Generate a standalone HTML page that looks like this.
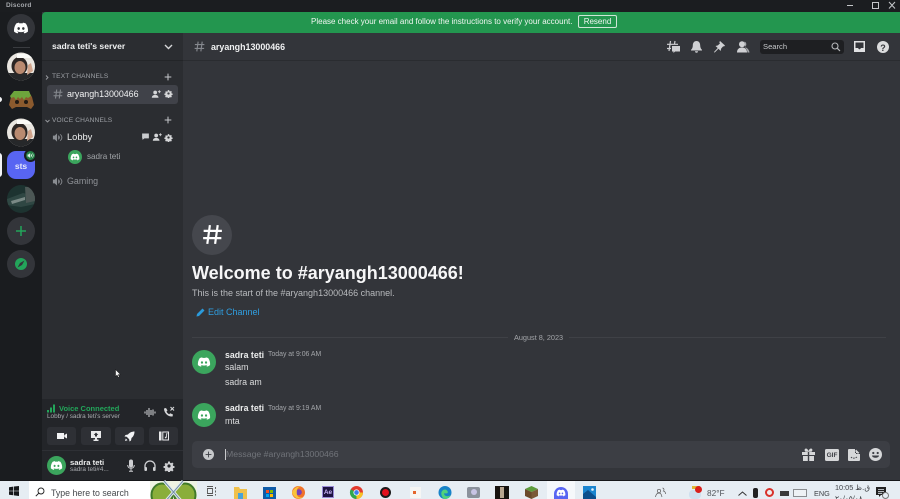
<!DOCTYPE html>
<html><head><meta charset="utf-8"><style>
html,body{margin:0;padding:0;background:#1a1c1f}
#r{position:relative;width:900px;height:499px;overflow:hidden;font-family:"Liberation Sans",sans-serif;background:#33353a;color:#dcddde;filter:blur(.3px)}
#r>*{position:absolute}
.t{white-space:nowrap;line-height:1}
svg{display:block;overflow:visible}
</style></head><body><div id="r">
<svg width="0" height="0" style="position:absolute"><defs>
<symbol id="cl" viewBox="0 0 24 24"><path fill="#fff" d="M19.27 5.33C17.94 4.71 16.5 4.26 15 4a.09.09 0 0 0-.07.03c-.18.33-.39.76-.53 1.09a16.09 16.09 0 0 0-4.8 0c-.14-.34-.35-.76-.54-1.09-.01-.02-.04-.03-.07-.03-1.5.26-2.93.71-4.27 1.33-.01 0-.02.01-.03.02-2.72 4.07-3.47 8.03-3.1 11.95 0 .02.01.04.03.05 1.8 1.32 3.53 2.12 5.24 2.65.03.01.06 0 .07-.02.4-.55.76-1.13 1.07-1.74.02-.04 0-.08-.04-.09-.57-.22-1.11-.48-1.64-.78-.04-.02-.04-.08-.01-.11.11-.08.22-.17.33-.25.02-.02.05-.02.07-.01 3.44 1.57 7.15 1.57 10.55 0 .02-.01.05-.01.07.01.11.09.22.17.33.26.04.03.04.09-.01.11-.52.31-1.07.56-1.64.78-.04.01-.05.06-.04.09.32.61.68 1.19 1.07 1.74.03.01.06.02.09.01 1.72-.53 3.45-1.33 5.25-2.65.02-.01.03-.03.03-.05.44-4.53-.73-8.46-3.1-11.95-.01-.01-.02-.02-.04-.02zM8.52 14.91c-1.03 0-1.89-.95-1.89-2.12s.84-2.12 1.89-2.12c1.06 0 1.9.96 1.89 2.12 0 1.17-.84 2.12-1.89 2.12zm6.97 0c-1.03 0-1.89-.95-1.89-2.12s.84-2.12 1.89-2.12c1.06 0 1.9.96 1.89 2.12 0 1.17-.83 2.12-1.89 2.12z"/></symbol>
<symbol id="gear" viewBox="0 0 24 24"><path fill="currentColor" fill-rule="evenodd" d="M10 2h4l.6 3 2 .9 2.600-1.700 2.800 2.800-1.700 2.600.9 2 3 .6v4l-3 .6-.9 2 1.700 2.600-2.800 2.800-2.600-1.700-2 .9-.6 3h-4l-.6-3-2-.9-2.600 1.700-2.800-2.800 1.700-2.600-.9-2-3-.6v-4l3-.6.9-2L2 7.800 4.800 5l2.600 1.700 2-.9zM12 8.500a3.500 3.500 0 1 0 0 7 3.500 3.500 0 0 0 0-7z" transform="translate(1.200 1.200) scale(.9)"/></symbol>
<symbol id="inv" viewBox="0 0 24 24"><path fill="currentColor" d="M10 4a4.500 4.500 0 1 1 0 9 4.500 4.500 0 0 1 0-9zM2 21c0-4.500 3.500-7 8-7s8 2.500 8 7zM19 3h2v2.500h2.500v2H21V10h-2V7.500h-2.500v-2H19z"/></symbol>
<symbol id="spk" viewBox="0 0 24 24"><path fill="currentColor" d="M11 3v18l-5-5H2V8h4zM13.500 7c2.500 1 3.500 3 3.500 5s-1 4-3.500 5zM18 4.500c3 1.500 4.500 4.500 4.500 7.500s-1.500 6-4.500 7.500l-1-1.500c2.500-1.500 3.500-3.500 3.500-6s-1-4.500-3.500-6z"/></symbol>
<symbol id="hash" viewBox="0 0 24 24"><path fill="none" stroke="currentColor" stroke-width="2.100" d="M9.500 3 7 21M17 3l-2.500 18M3.500 8.500H21M3 15.500h17.500"/></symbol>
<symbol id="plus" viewBox="0 0 12 12"><path fill="none" stroke="currentColor" stroke-width="1.500" d="M6 1v10M1 6h10"/></symbol>
<symbol id="chat" viewBox="0 0 24 24"><path fill="currentColor" d="M3 4h18v13H9l-5 4v-4H3z"/></symbol>
</defs></svg>

<!-- chrome -->
<div style="left:0;top:0;width:900px;height:12px;background:#1b1d20"></div>
<div class="t" style="left:6px;top:2px;font:bold 6.500px 'Liberation Sans',sans-serif;color:#a6a9ad;letter-spacing:.2px">Discord</div>
<svg style="left:850px;top:0" width="50" height="12"><path fill="none" stroke="#c4c6c9" stroke-width="1" d="M-3 5.500h6M22.500 2.500h6v6h-6zM39 2l6 6.500M45 2l-6 6.500"/></svg>
<div style="left:0;top:12px;width:42px;height:469px;background:#1a1c1f"></div>

<!-- banner -->
<div style="left:42px;top:12px;width:858px;height:21px;background:#23964f;border-radius:4px 0 0 0"></div>
<div class="t" style="left:311px;top:18px;font-size:8px;color:#f1f6f2">Please check your email and follow the instructions to verify your account.</div>
<div class="t" style="left:578px;top:15px;width:39px;height:13px;box-sizing:border-box;border:1px solid #cfe6d7;border-radius:2px;font-size:8px;line-height:11px;text-align:center;color:#f1f6f2">Resend</div>

<!-- server rail -->
<div style="left:7px;top:14px;width:28px;height:28px;border-radius:50%;background:#33353a"></div>
<svg style="left:13px;top:20px" width="16" height="16"><use href="#cl" width="16" height="16"/></svg>
<div style="left:13px;top:47px;width:17px;height:1px;background:#3a3c40"></div>

<svg style="left:7px;top:52px" width="28" height="29" viewBox="0 0 28 29"><defs><clipPath id="c1"><circle cx="14" cy="14.500" r="14"/></clipPath></defs><g clip-path="url(#c1)"><rect width="28" height="29" fill="#e9e6e0"/><rect x="0" y="21" width="28" height="8" fill="#26282a"/><ellipse cx="12.500" cy="14" rx="8" ry="9" fill="#2c2624"/><ellipse cx="13" cy="15.500" rx="5.500" ry="6.500" fill="#b98a70"/><path d="M21 13l3-2 2 8-6 4z" fill="#d0a48c"/><rect x="10" y="2" width="15" height="4" fill="#fbfbf8"/></g></svg>
<svg style="left:7px;top:118px" width="28" height="29" viewBox="0 0 28 29"><defs><clipPath id="c2"><circle cx="14" cy="14.500" r="14"/></clipPath></defs><g clip-path="url(#c2)"><rect width="28" height="29" fill="#e9e6e0"/><rect x="0" y="21" width="28" height="8" fill="#26282a"/><ellipse cx="12.500" cy="14" rx="8" ry="9" fill="#2c2624"/><ellipse cx="13" cy="15.500" rx="5.500" ry="6.500" fill="#b98a70"/><path d="M21 13l3-2 2 8-6 4z" fill="#d0a48c"/><rect x="10" y="2" width="15" height="4" fill="#fbfbf8"/></g></svg>

<svg style="left:8px;top:90px" width="27" height="20" viewBox="0 0 27 20"><path fill="#8b5a2e" d="M6 2h15l3 5 2 8-3 4-4-2H8l-4 2-3-4 2-8z"/><path fill="#6da53c" d="M6 1h15l2 5-3 2-2-1-2 3-2-3-2 2-2-2-2 3-2-3-3 1-1-2z"/><circle cx="9" cy="12" r="2" fill="#211a14"/><circle cx="18" cy="12" r="2" fill="#211a14"/></svg>
<div style="left:-1px;top:97px;width:3px;height:5px;border-radius:0 3px 3px 0;background:#f2f3f5"></div>

<div style="left:-1px;top:153px;width:3px;height:24px;border-radius:0 3px 3px 0;background:#f2f3f5"></div>
<div style="left:7px;top:151px;width:28px;height:28px;border-radius:9px;background:#5865f2"></div>
<div class="t" style="left:7px;top:161px;width:28px;text-align:center;font:bold 8.500px 'Liberation Sans',sans-serif;color:#e8eafc">sts</div>
<div style="left:24px;top:149px;width:13px;height:13px;border-radius:50%;background:#248046;border:2px solid #1a1c1f;box-sizing:border-box"></div>
<svg style="left:27px;top:152px;color:#dff3e6" width="7" height="7"><use href="#spk" width="7" height="7"/></svg>

<svg style="left:7px;top:185px" width="28" height="28" viewBox="0 0 28 28"><defs><clipPath id="c3"><circle cx="14" cy="14" r="14"/></clipPath></defs><g clip-path="url(#c3)"><rect width="28" height="28" fill="#1d3330"/><path d="M0 14 16 8l12 3v8l-14 3-14-2z" fill="#2f4743"/><path d="M18 2h10v14l-9 2z" fill="#4c5755"/><path d="M4 16l14-4v3L5 19z" fill="#7a8a86"/></g></svg>

<div style="left:7px;top:217px;width:28px;height:28px;border-radius:50%;background:#33353a"></div>
<svg style="left:15px;top:225px;color:#23a55a" width="12" height="12"><use href="#plus" width="12" height="12"/></svg>
<div style="left:7px;top:250px;width:28px;height:28px;border-radius:50%;background:#33353a"></div>
<div style="left:15px;top:258px;width:12px;height:12px;border-radius:50%;background:#23a55a"></div>
<svg style="left:17px;top:260px" width="8" height="8" viewBox="0 0 8 8"><path fill="#33353a" d="M7.500.5 5 5 3 3zM.5 7.500 3 3l2 2z"/></svg>

<!-- channel sidebar -->
<div style="left:42px;top:33px;width:141px;height:448px;background:#2b2d31"></div>
<div style="left:42px;top:60px;width:141px;height:1px;background:#232528"></div>
<div class="t" style="left:52px;top:41px;font:bold 8.600px 'Liberation Sans',sans-serif;color:#f0f1f2">sadra teti's server</div>
<svg style="left:164px;top:44px" width="9" height="6"><path fill="none" stroke="#d5d6d8" stroke-width="1.400" d="M1 1l3.500 3.500L8 1"/></svg>

<svg style="left:45px;top:75px" width="4" height="5"><path fill="none" stroke="#9a9ca1" stroke-width=".9" d="M1 .5 3 2.500 1 4.500"/></svg>
<div class="t" style="left:52px;top:74px;font-size:6.600px;color:#9da0a5;letter-spacing:.15px">TEXT CHANNELS</div>
<svg style="left:164px;top:73px;color:#c5c7ca" width="8" height="8"><use href="#plus" width="8" height="8"/></svg>

<div style="left:47px;top:85px;width:131px;height:19px;border-radius:3px;background:#404249"></div>
<svg style="left:52px;top:88px;color:#86898f" width="12" height="12"><use href="#hash" width="12" height="12"/></svg>
<div class="t" style="left:67px;top:89.500px;font-size:8.900px;color:#f0f1f2">aryangh13000466</div>
<svg style="left:151px;top:89px;color:#d5d6d8" width="10" height="10"><use href="#inv" width="10" height="10"/></svg>
<svg style="left:164px;top:89px;color:#d5d6d8" width="9" height="9"><use href="#gear" width="9" height="9"/></svg>

<svg style="left:45px;top:119px" width="5" height="4"><path fill="none" stroke="#9a9ca1" stroke-width=".9" d="M.5 1 2.500 3 4.500 1"/></svg>
<div class="t" style="left:52px;top:117.500px;font-size:6.600px;color:#9da0a5;letter-spacing:.15px">VOICE CHANNELS</div>
<svg style="left:164px;top:116px;color:#c5c7ca" width="8" height="8"><use href="#plus" width="8" height="8"/></svg>

<svg style="left:52px;top:132px;color:#8a8d92" width="11" height="11"><use href="#spk" width="11" height="11"/></svg>
<div class="t" style="left:67px;top:133px;font-size:9.300px;color:#eceded">Lobby</div>
<svg style="left:141px;top:132px;color:#c9cbce" width="9" height="9"><use href="#chat" width="9" height="9"/></svg>
<svg style="left:152px;top:132px;color:#d5d6d8" width="10" height="10"><use href="#inv" width="10" height="10"/></svg>
<svg style="left:164px;top:133px;color:#d5d6d8" width="9" height="9"><use href="#gear" width="9" height="9"/></svg>

<div style="left:68px;top:150px;width:14px;height:14px;border-radius:50%;background:#3ba55d"></div>
<svg style="left:70px;top:152px" width="10" height="10"><use href="#cl" width="10" height="10"/></svg>
<div class="t" style="left:87px;top:153px;font-size:8.100px;color:#a2a5a9">sadra teti</div>

<svg style="left:52px;top:175.500px;color:#8a8d92" width="11" height="11"><use href="#spk" width="11" height="11"/></svg>
<div class="t" style="left:67px;top:177px;font-size:8.900px;color:#8f9297">Gaming</div>

<svg style="left:115px;top:369px" width="6" height="9" viewBox="0 0 6 9"><path fill="#f4f4f4" stroke="#111" stroke-width=".5" d="M.5.500v7l1.600-1.500 1 2.500 1.200-.5-1-2.400h2.200z"/></svg>

<!-- voice panel -->
<div style="left:42px;top:399px;width:141px;height:82px;background:#232529"></div>
<svg style="left:47px;top:404px" width="9" height="9"><path fill="#23a55a" d="M0 6h2v2.500H0zM3 3.500h2v5H3zM6 .5h2v8H6z"/></svg>
<div class="t" style="left:59px;top:404px;font:bold 7.500px 'Liberation Sans',sans-serif;color:#23a55a">Voice Connected</div>
<div class="t" style="left:47px;top:414px;font-size:6.400px;color:#a9abaf">Lobby / sadra teti's server</div>
<svg style="left:144px;top:407px" width="12" height="11"><path fill="none" stroke="#c9cbce" stroke-width="1.100" d="M1 4.500v2M3 3v5M5 1v9M7 3v5M9 2.500v6M11 4.500v2"/></svg>
<svg style="left:163px;top:406px" width="12" height="12" viewBox="0 0 12 12"><path fill="#d5d6d8" d="M1 2.500 3 2l1.500 2.500-1 1c.5 1.200 1.500 2.200 2.700 2.700l1-1L10 8.500l-.5 2C5 11 1 7 1 2.500z"/><path fill="none" stroke="#d5d6d8" stroke-width="1.100" d="M7.500 1l3.500 3.500M11 1 7.500 4.500"/></svg>

<div style="left:47px;top:427px;width:29px;height:18px;border-radius:3px;background:#2e3035"></div>
<div style="left:81px;top:427px;width:30px;height:18px;border-radius:3px;background:#2e3035"></div>
<div style="left:115px;top:427px;width:29px;height:18px;border-radius:3px;background:#2e3035"></div>
<div style="left:149px;top:427px;width:29px;height:18px;border-radius:3px;background:#2e3035"></div>
<svg style="left:57px;top:432px" width="10" height="8"><path fill="#f2f3f5" d="M0 1h7v6H0zM7.300 3 10 1.500v5L7.300 5z"/></svg>
<svg style="left:91px;top:431px" width="10" height="10"><path fill="#e8e9ea" d="M0 0h10v7H6v1.500h1.500V10h-5V8.500H4V7H0z"/><path fill="#2e3035" d="M5 1.500 7.300 4H6v1.500H4V4H2.700z"/></svg>
<svg style="left:124px;top:431px" width="11" height="11" viewBox="0 0 11 11"><path fill="#f2f3f5" d="M10.500.5C8 .5 5.500 1.500 4 3.500L1.500 4l-1 1.500 2.200.3 2.500 2.500.3 2.200L7 9.500l.5-2.500C9.500 5.500 10.500 3 10.500.5zM1.800 7.500l1.700 1.700L1 10z"/></svg>
<svg style="left:159px;top:431px" width="10" height="10" viewBox="0 0 10 10"><path fill="#e8e9ea" fill-rule="evenodd" d="M0 .5h2.500v9H0zM3.300.5H10v9H3.300zM4.300 1.500v7H9v-7z"/><path fill="none" stroke="#e8e9ea" stroke-width=".8" d="M7.500 2.500v3.800M7.500 2.500l1 .4"/><circle cx="6.700" cy="6.500" r=".9" fill="#e8e9ea"/></svg>

<div style="left:42px;top:450px;width:141px;height:1px;background:#2e3035"></div>
<div style="left:47px;top:456px;width:19px;height:19px;border-radius:50%;background:#3ba55d"></div>
<svg style="left:50px;top:459px" width="13" height="13"><use href="#cl" width="13" height="13"/></svg>
<div class="t" style="left:70px;top:458px;font:bold 7.700px 'Liberation Sans',sans-serif;color:#eceded">sadra teti</div>
<div class="t" style="left:70px;top:467px;font-size:6.400px;color:#a9abaf">sadra teti#4...</div>
<svg style="left:127px;top:460px" width="8" height="12" viewBox="0 0 8 12"><path fill="#cfd0d3" d="M2 1.500a2 2 0 0 1 4 0v4a2 2 0 0 1-4 0z"/><path fill="none" stroke="#cfd0d3" d="M.7 5c0 2 1.300 3.300 3.300 3.300S7.300 7 7.300 5M4 8.300V11M2 11.300h4"/></svg>
<svg style="left:144px;top:460px" width="12" height="12" viewBox="0 0 12 12"><path fill="none" stroke="#cfd0d3" stroke-width="1.300" d="M1 8V6a5 5 0 0 1 10 0v2"/><rect x=".4" y="7" width="2.600" height="4" rx="1" fill="#cfd0d3"/><rect x="9" y="7" width="2.600" height="4" rx="1" fill="#cfd0d3"/></svg>
<svg style="left:163px;top:460px;color:#cfd0d3" width="12" height="12"><use href="#gear" width="12" height="12"/></svg>

<!-- main header -->
<div style="left:183px;top:60px;width:717px;height:1px;background:#2a2c30"></div>
<svg style="left:193px;top:40px;color:#85888e" width="13" height="13"><use href="#hash" width="13" height="13"/></svg>
<div class="t" style="left:211px;top:41.500px;font:bold 8.900px 'Liberation Sans',sans-serif;color:#f0f1f2">aryangh13000466</div>

<svg style="left:667px;top:41px" width="13" height="12" viewBox="0 0 13 12"><path fill="none" stroke="#cfd0d3" stroke-width="1.200" d="M3.500 0 2 10M8 0 7.500 3M0 3.300h11M0 7.500h4"/><path fill="#cfd0d3" d="M5 5h8v5.500H8L6.500 12v-1.500H5z"/></svg>
<svg style="left:691px;top:41px" width="11" height="12" viewBox="0 0 11 12"><path fill="#cfd0d3" d="M5.500 0C3 0 1.800 2 1.800 4.500c0 2-.8 3.500-1.800 4.300v.7h11v-.7C10 8 9.200 6.500 9.200 4.500 9.200 2 8 0 5.500 0zM4 10.200h3a1.500 1.500 0 0 1-3 0z"/></svg>
<svg style="left:714px;top:41px" width="11" height="12" viewBox="0 0 11 12"><path fill="#cfd0d3" d="M6 0l5 4.500-1 1-.8-.3-2 2.300L6.600 10 4.500 7.800.6 11.600 0 11l3.700-4L1.500 5l2.400-.6L6 2.400 5.300 1.300z"/></svg>
<svg style="left:737px;top:41px" width="13" height="12" viewBox="0 0 13 12"><circle cx="5" cy="3.200" r="3" fill="#cfd0d3"/><path fill="#cfd0d3" d="M0 11.500c0-3.500 2.200-5 5-5s5 1.500 5 5z"/><path fill="#a5a7ab" d="M7.500.5a3 3 0 0 1 0 5.500c2 .5 4.500 2 5 5.500h-2c0-2-1-3.500-2-4.500z"/></svg>
<div style="left:760px;top:40px;width:84px;height:14px;border-radius:3px;background:#1e1f22"></div>
<div class="t" style="left:763px;top:43px;font-size:7.600px;color:#c4c6c9">Search</div>
<svg style="left:831px;top:42px" width="10" height="10"><circle cx="4" cy="4" r="3" fill="none" stroke="#b5b7ba" stroke-width="1.100"/><path stroke="#b5b7ba" stroke-width="1.200" d="M6.300 6.300 9 9"/></svg>
<svg style="left:854px;top:41px" width="11" height="11" viewBox="0 0 11 11"><path fill="#e0e1e3" fill-rule="evenodd" d="M0 0h11v11H0zM1.500 1.500v5.500h2.500l1 1.300h1L7 7h2.500V1.500z"/></svg>
<div style="left:877px;top:41px;width:12px;height:12px;border-radius:50%;background:#dcddde"></div>
<div class="t" style="left:877px;top:43px;width:12px;text-align:center;font:bold 9px 'Liberation Sans',sans-serif;color:#33353a">?</div>

<!-- welcome -->
<div style="left:192px;top:215px;width:40px;height:40px;border-radius:50%;background:#45474d"></div>
<svg style="left:200px;top:222px;color:#fff" width="25" height="25"><use href="#hash" width="25" height="25"/></svg>
<div class="t" style="left:192px;top:262.500px;font:bold 18px 'Liberation Sans',sans-serif;color:#f6f6f7">Welcome to #aryangh13000466!</div>
<div class="t" style="left:192px;top:288.500px;font-size:9px;color:#b8babd">This is the start of the #aryangh13000466 channel.</div>
<svg style="left:196px;top:308px" width="9" height="9" viewBox="0 0 9 9"><path fill="#2b9bdc" d="M6.500.5 8.500 2.500 3 8 .5 8.500 1 6z"/></svg>
<div class="t" style="left:208px;top:308px;font-size:9px;color:#2f9ee0">Edit Channel</div>

<!-- divider -->
<div style="left:192px;top:337px;width:316px;height:1px;background:#3f4146"></div>
<div style="left:569px;top:337px;width:317px;height:1px;background:#3f4146"></div>
<div class="t" style="left:514px;top:334px;font-size:7.300px;color:#a3a5a9">August 8, 2023</div>

<!-- messages -->
<div style="left:192px;top:350px;width:24px;height:24px;border-radius:50%;background:#3ba55d"></div>
<svg style="left:197px;top:355px" width="14" height="14"><use href="#cl" width="14" height="14"/></svg>
<div class="t" style="left:225px;top:350px;font:bold 8.800px 'Liberation Sans',sans-serif;color:#eceded">sadra teti</div>
<div class="t" style="left:268px;top:352px;font-size:6.900px;color:#a3a5a9">Today at 9:06 AM</div>
<div class="t" style="left:225px;top:363px;font-size:8.800px;color:#dcddde">salam</div>
<div class="t" style="left:225px;top:378px;font-size:8.800px;color:#dcddde">sadra am</div>

<div style="left:192px;top:403px;width:24px;height:24px;border-radius:50%;background:#3ba55d"></div>
<svg style="left:197px;top:408px" width="14" height="14"><use href="#cl" width="14" height="14"/></svg>
<div class="t" style="left:225px;top:403px;font:bold 8.800px 'Liberation Sans',sans-serif;color:#eceded">sadra teti</div>
<div class="t" style="left:268px;top:405.500px;font-size:6.900px;color:#a3a5a9">Today at 9:19 AM</div>
<div class="t" style="left:225px;top:417px;font-size:8.800px;color:#dcddde">mta</div>

<!-- input -->
<div style="left:192px;top:441px;width:698px;height:27px;border-radius:5px;background:#3c3e44"></div>
<div style="left:203px;top:449px;width:11px;height:11px;border-radius:50%;background:#c6c8cb"></div>
<svg style="left:205px;top:451px;color:#3c3e44" width="7" height="7"><use href="#plus" width="7" height="7"/></svg>
<div style="left:225px;top:449px;width:1px;height:11px;background:#c8c9cb"></div>
<div class="t" style="left:226px;top:450px;font-size:8.700px;color:#71747a">Message #aryangh13000466</div>
<svg style="left:802px;top:448px" width="13" height="13" viewBox="0 0 13 13"><path fill="#d6d7d9" d="M0 4h5.800v3H0zM7.200 4H13v3H7.200zM1 8h4.800v5H1zM7.200 8H12v5H7.200zM4 .5C5.300.5 6 2 6.500 3 7 2 7.700.5 9 .5c1.500 0 2 2 .5 3.200H3.500C2 2.500 2.500.5 4 .5z"/></svg>
<div style="left:825px;top:449px;width:14px;height:12px;border-radius:1.500px;background:#d6d7d9"></div>
<div class="t" style="left:825px;top:451.500px;width:14px;text-align:center;font:bold 6.500px 'Liberation Sans',sans-serif;color:#3c3e44">GIF</div>
<svg style="left:848px;top:449px" width="12" height="12" viewBox="0 0 12 12"><path fill="#d6d7d9" d="M1 0h6.500L12 4.500V11a1 1 0 0 1-1 1H1a1 1 0 0 1-1-1V1a1 1 0 0 1 1-1z"/><path fill="none" stroke="#3c3e44" d="M7.500 0v4.500H12M3 8c1 1.500 4 1.500 6 0" stroke-dasharray="1.500 1"/></svg>
<div style="left:869px;top:448px;width:13px;height:13px;border-radius:50%;background:#d6d7d9"></div>
<svg style="left:869px;top:448px" width="13" height="13"><circle cx="4.300" cy="5" r="1.100" fill="#3c3e44"/><circle cx="8.700" cy="5" r="1.100" fill="#3c3e44"/><path fill="#3c3e44" d="M3 7.500h7c0 3-7 3-7 0z"/></svg>

<!-- taskbar -->
<div style="left:0;top:480px;width:900px;height:1px;background:#16171a"></div>
<div style="left:0;top:481px;width:900px;height:18px;background:#e6edf3"></div>
<div style="left:29px;top:481px;width:121px;height:18px;background:#fff"></div>
<svg style="left:9px;top:486px" width="10" height="10"><path fill="#16181b" d="M0 1.200 4.300.6V4.700H0zM5 .5 10 0V4.700H5zM0 5.300h4.300v4L0 8.800zM5 5.300h5V10L5 9.400z"/></svg>
<svg style="left:35px;top:487px" width="10" height="10"><circle cx="6" cy="4" r="3" fill="none" stroke="#222" stroke-width=".9"/><path stroke="#222" d="M3.800 6.200.8 9.200"/></svg>
<div class="t" style="left:51px;top:489px;font-size:8.800px;color:#45484c">Type here to search</div>
<svg style="left:150px;top:481px" width="47" height="18" viewBox="0 0 47 18"><rect width="47" height="18" fill="#eef3e2"/><ellipse cx="12" cy="14" rx="10.500" ry="11.500" fill="#8aae3a" stroke="#3f7a2a" stroke-width="2"/><ellipse cx="35" cy="14" rx="10.500" ry="11.500" fill="#8aae3a" stroke="#3f7a2a" stroke-width="2"/><path fill="none" stroke="#e5ecee" stroke-width="3" d="M14 22 33 0M33 22 14 0"/><path fill="none" stroke="#6f8fa6" stroke-width="1" d="M14 22 33 0M33 22 14 0"/></svg>
<svg style="left:206px;top:486px" width="11" height="10"><path fill="none" stroke="#555" stroke-width=".9" d="M1 .5h6M1 9.500h6M1.500 2.500h5v5h-5zM9.500 1v2M9.500 4.500v2M9.500 8v1.500"/></svg>
<svg style="left:234px;top:487px" width="13" height="12"><path fill="#f0c14b" d="M0 0h5l1 2h7v10H0z"/><path fill="#4aa3d8" d="M4 6h5v6H4z"/></svg>
<div style="left:263px;top:487px;width:13px;height:12px;background:#0f5ca8"></div>
<svg style="left:266px;top:490px" width="7" height="7"><path fill="#f25022" d="M0 0h3v3H0z"/><path fill="#7fba00" d="M4 0h3v3H4z"/><path fill="#00a4ef" d="M0 4h3v3H0z"/><path fill="#ffb900" d="M4 4h3v3H4z"/></svg>
<svg style="left:292px;top:486px" width="13" height="13"><circle cx="6.500" cy="6.500" r="6.500" fill="#f0722a"/><circle cx="6.800" cy="6.300" r="3" fill="#7542b8"/><path fill="#f9c33a" d="M0 6.500C2 1 7 0 9 .5 6 1 4 3 5 9c1 2.500 4 3 6 2C8 14 2 13 0 6.500z"/></svg>
<div style="left:322px;top:486px;width:12px;height:12px;background:#1d1340;border:.5px solid #9a8cd8;box-sizing:border-box"></div>
<div class="t" style="left:322px;top:489px;width:12px;text-align:center;font:bold 6.500px 'Liberation Sans',sans-serif;color:#c9b6f7">Ae</div>
<svg style="left:350px;top:486px" width="13" height="13" viewBox="0 0 14 14"><circle cx="7" cy="7" r="7" fill="#e33b2e"/><path fill="#f7c325" d="M7 7 14 7A7 7 0 0 1 7 14z"/><path fill="#2fa84f" d="M7 7 7 14A7 7 0 0 1 .9 3.500z"/><circle cx="7" cy="7" r="3.300" fill="#fff"/><circle cx="7" cy="7" r="2.500" fill="#3b7ded"/></svg>
<div style="left:380px;top:487px;width:11px;height:11px;border-radius:50%;background:#e2101c;border:2px solid #1b1b1b;box-sizing:border-box"></div>
<div style="left:410px;top:487px;width:11px;height:11px;background:#f6f6f4"></div>
<div style="left:413px;top:491px;width:3px;height:3px;background:#e4662c"></div>
<svg style="left:438px;top:486px" width="14" height="13" viewBox="0 0 14 14"><circle cx="7" cy="7" r="7" fill="#1883c9"/><path fill="#51d27c" d="M3 8c0-3 3-5 5-4s3 3 1 4H6c0 3 4 4 7 2-1 3-4 4-6 4S3 11 3 8z"/></svg>
<div style="left:467px;top:487px;width:13px;height:11px;border-radius:2px;background:#8b929c"></div>
<div style="left:471px;top:489px;width:6px;height:6px;border-radius:50%;background:#c8c4e4"></div>
<div style="left:495px;top:486px;width:14px;height:13px;background:#17130f"></div>
<div style="left:500px;top:487px;width:4px;height:11px;background:#b8a68f"></div>
<svg style="left:525px;top:486px" width="13" height="13"><path fill="#5d9c3c" d="M6.500 0 13 3 6.500 6 0 3z"/><path fill="#6a4a2b" d="M0 3l6.500 3v7L0 10z"/><path fill="#7b5a38" d="M13 3 6.500 6v7L13 10z"/></svg>
<div style="left:547px;top:481px;width:28px;height:18px;background:#f5f8fb"></div>
<div style="left:554px;top:487px;width:14px;height:12px;border-radius:7px 7px 0 0;background:#5865f2"></div>
<svg style="left:556px;top:488px" width="10" height="10"><use href="#cl" width="10" height="10"/></svg>
<svg style="left:583px;top:486px" width="13" height="13"><rect width="13" height="13" fill="#1b85cf"/><path fill="#0d4f8c" d="M0 13V8l5-4 8 7v2z"/><circle cx="9.500" cy="3.500" r="1.300" fill="#e9f3fa"/></svg>

<svg style="left:655px;top:487px" width="11" height="11"><circle cx="4" cy="4" r="1.700" fill="none" stroke="#555" stroke-width=".7"/><path fill="none" stroke="#555" stroke-width=".7" d="M.5 10c.5-3 1.500-4 3.500-4s2.500 2 3 4M7.500 1c1.500 0 2 2 1 3 1.500 0 2 2 2 3"/></svg>
<div style="left:689px;top:490px;width:12px;height:9px;border-radius:4px;background:#cfe0ef"></div>
<div style="left:692px;top:486px;width:8px;height:3px;background:#e0b936"></div>
<div style="left:695px;top:486px;width:7px;height:7px;border-radius:50%;background:#d9201c"></div>
<div class="t" style="left:707px;top:489px;font-size:8.300px;color:#52565b">82°F</div>
<svg style="left:738px;top:491px" width="9" height="5"><path fill="none" stroke="#333" d="M.5 4.500 4.500 1l4 3.500"/></svg>
<div style="left:753px;top:488px;width:5px;height:10px;border-radius:2px;background:#222"></div>
<div style="left:765px;top:488px;width:9px;height:9px;box-sizing:border-box;border-radius:50%;border:2px solid #d8322b;background:#eee"></div>
<div style="left:780px;top:491px;width:9px;height:5px;background:#3a3a3a"></div>
<div style="left:793px;top:489px;width:14px;height:8px;box-sizing:border-box;border:1px solid #8a8d90;background:#eef2f5"></div>
<div class="t" style="left:814px;top:490px;font-size:7.300px;color:#3e4145">ENG</div>
<div class="t" style="left:835px;top:484px;font-size:7.300px;color:#3e4145">10:05 <span style="font-family:'DejaVu Sans',sans-serif">ق.ظ</span></div>
<div class="t" style="left:835px;top:495px;font-size:7.300px;color:#3e4145">۲۰/۰۵/۰۸</div>
<svg style="left:876px;top:487px" width="11" height="11"><path fill="#222" d="M0 0h10v8H5L3 10V8H0z"/><path stroke="#e6edf3" stroke-width=".8" d="M2 2.500h6M2 4.500h6M2 6.300h4"/></svg>
<div style="left:882px;top:492px;width:7px;height:7px;box-sizing:border-box;border:.7px solid #777;border-radius:50%;background:#e6edf3"></div>
</div></body></html>
